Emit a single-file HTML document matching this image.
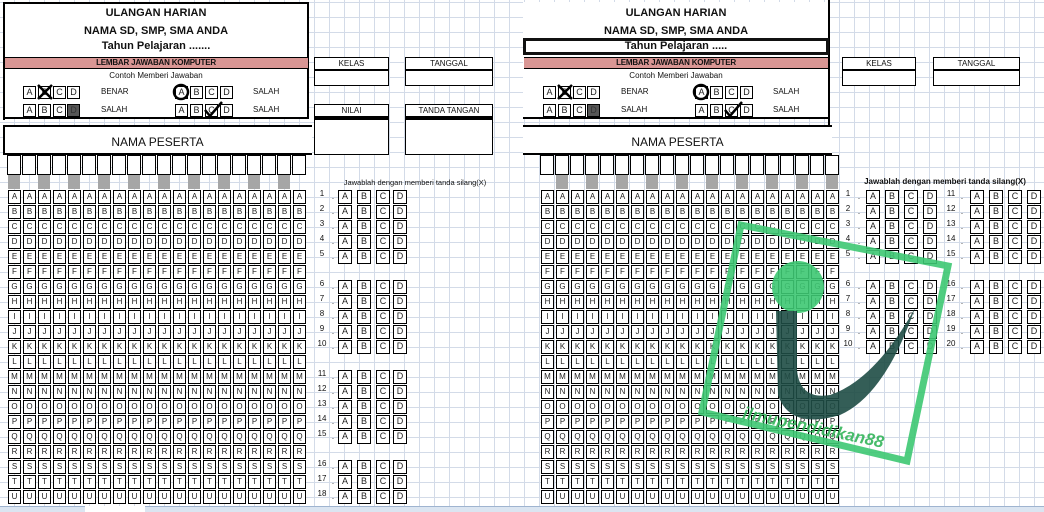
<!DOCTYPE html>
<html><head><meta charset="utf-8">
<style>
html,body{margin:0;padding:0}
body{width:1044px;height:512px;overflow:hidden;position:relative;background-color:#fff;
background-image:repeating-linear-gradient(90deg,transparent 0 14px,#d3dbe8 14px 15px),repeating-linear-gradient(0deg,transparent 0 14px,#d3dbe8 14px 15px);
font-family:"Liberation Sans",sans-serif;color:#111}
.a{position:absolute;box-sizing:border-box}
.b{position:absolute;box-sizing:border-box;border:1.5px solid #000;background:#fff;font-size:9px;text-align:center;line-height:10px;color:#222}
.t{position:absolute;white-space:nowrap;text-align:center}
</style></head><body>
<div id="root"></div>
<script>
var R=document.getElementById('root'),h='';
function d(x,y,w,hh,st,txt){h+='<div class="a" style="left:'+x+'px;top:'+y+'px;width:'+w+'px;height:'+hh+'px;'+(st||'')+'">'+(txt||'')+'</div>';}
function bx(x,y,w,hh,txt,st){h+='<div class="b" style="left:'+x+'px;top:'+y+'px;width:'+w+'px;height:'+hh+'px;line-height:'+(hh-3)+'px;'+(st||'')+'">'+(txt||'')+'</div>';}
function tx(x,y,w,s,txt,st){h+='<div class="t" style="left:'+x+'px;top:'+y+'px;width:'+w+'px;font-size:'+s+'px;'+(st||'')+'">'+txt+'</div>';}
function header(ox,full){
 if(full){d(ox+3,2,306,117,'border:2px solid #000;background:#fff');}
 else{d(ox+3,2,306,117,'background:#fff;border-bottom:2px solid #000');d(ox+308,0,2,130,'background:#000');}
 tx(ox+3,7,306,11,'ULANGAN HARIAN','font-weight:bold');
 tx(ox+3,25,306,11,'NAMA SD, SMP, SMA ANDA','font-weight:bold');
 if(!full)d(ox+3,38,306,17,'border:3px solid #111');
 tx(ox+3,40,306,11,'Tahun Pelajaran '+(full?'.......':'.....'),'font-weight:bold');
 d(ox+4,57,304,12,'background:#d99694;border-top:1px solid #000;border-bottom:1px solid #000');
 tx(ox+3,58,306,8,'LEMBAR JAWABAN KOMPUTER','font-weight:bold;letter-spacing:-.2px');
 tx(ox+3,71,306,8,'Contoh Memberi Jawaban');
 var xs=[23,38,53,67],xs2=[175,190,205,220],L='ABCD';
 for(var i=0;i<4;i++){bx(ox+xs[i],86,13,13,L[i]);bx(ox+xs[i],104,13,13,L[i],i==3?'background:#555;color:#333':'');
 bx(ox+xs2[i],86,13,13,L[i]);bx(ox+xs2[i],104,13,13,L[i]);}
 h+='<svg class="a" style="left:'+(ox+35)+'px;top:82px" width="20" height="20"><path d="M3 3L17 17M17 3L3 17" stroke="#000" stroke-width="2.5"/></svg>';
 h+='<svg class="a" style="left:'+(ox+171)+'px;top:82px" width="20" height="20"><circle cx="10" cy="10" r="7" fill="none" stroke="#000" stroke-width="2.5"/></svg>';
 h+='<svg class="a" style="left:'+(ox+202)+'px;top:100px" width="22" height="20"><path d="M3 10L8 16L20 2" fill="none" stroke="#000" stroke-width="2.5"/></svg>';
 tx(ox+101,87,40,8,'BENAR','text-align:left');tx(ox+101,105,40,8,'SALAH','text-align:left');
 tx(ox+253,87,40,8,'SALAH','text-align:left');tx(ox+253,105,40,8,'SALAH','text-align:left');
 d(ox+3,125,309,30,'background:#fff;border-top:2px solid #000;border-bottom:2px solid #000;'+(full?'border-left:2px solid #000;':''));
 tx(ox+3,135,309,12,'NAMA PESERTA');
}
function grid(ox,gstart){
 var L='ABCDEFGHIJKLMNOPQRSTU';
 for(var c=0;c<20;c++){var x=ox+c*15;
  bx(x-1,155,14,20,'');
  if(c%2==gstart)d(x,175,12,14,'background:#a6a6a6');
  for(var r=0;r<21;r++)bx(x,190+r*15,13,14,L[r],'font-size:8px');
 }
}
function ans(nx,bxs,n,y){tx(nx-8,y-1,16,8,n);tx(nx+8,y+2,6,8,'.');for(var i=0;i<4;i++)bx(bxs[i],y,14,14,'ABCD'[i]);}
header(0,true);header(520,false);
d(3,2,2,118,'background:#000');d(3,125,2,30,'background:#000');
grid(8,0);grid(541,1);
function sm(x,y,w,hh,t,ex){d(x,y,w,hh,'border:1.5px solid #000;background:#fff');d(x,y+12,w,1.5,'background:#000');tx(x,y+2,w,8,t);if(ex){d(x,y+14,w,1.5,'background:#000');}}
sm(314,57,75,29,'KELAS');sm(405,57,88,29,'TANGGAL');sm(314,104,75,51,'NILAI',1);sm(405,104,88,51,'TANDA TANGAN',1);
sm(842,57,74,29,'KELAS');sm(933,57,87,29,'TANGGAL');
tx(330,178,170,7.5,'Jawablah dengan memberi tanda silang(X)');
tx(850,177,190,8,'Jawablah dengan memberi tanda silang(X)','font-weight:bold');
var rows=[0,1,2,3,4,6,7,8,9,10,12,13,14,15,16,18,19,20];
for(var i=0;i<18;i++)ans(322,[338,357,376,393],i+1,190+rows[i]*15);
for(var i=0;i<10;i++){ans(848,[866,885,904,923],i+1,190+rows[i]*15);ans(951,[970,989,1008,1027],i+11,190+rows[i]*15);}
d(0,506,1044,6,'background:#dbe5f1;border-top:1px solid #9fb4d0');d(85,506,60,6,'background:#fff');
R.innerHTML=h;
</script>
<svg class="a" style="left:0;top:0;position:absolute" width="1044" height="512">
<g opacity="0.9">
<polygon points="741,225 948,266 907,461 702,412" fill="none" stroke="#3ec873" stroke-width="7"/>
<circle cx="798" cy="287" r="26" fill="#3ec873"/>
<path d="M776 311 L797 311 L797 370 Q800 400 830 395 Q875 380 915 308 Q885 395 840 415 Q790 430 778 395 Z" fill="#1f4d45"/>
<text x="742" y="418" transform="rotate(12 742 418)" font-family="Liberation Sans,sans-serif" font-weight="bold" font-style="italic" font-size="17" fill="#34b55a">ilmupendidikan88</text>
</g>
</svg>
</body></html>
